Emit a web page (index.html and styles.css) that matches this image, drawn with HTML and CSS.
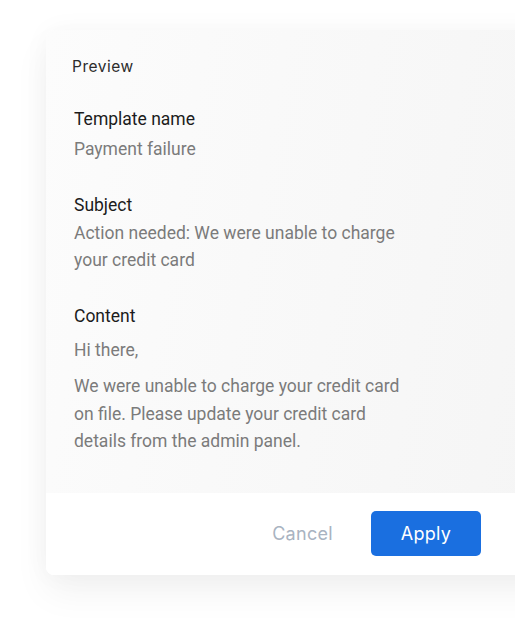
FILE: index.html
```html
<!DOCTYPE html>
<html>
<head>
<meta charset="utf-8">
<link rel="stylesheet" href="styles.css">
</head>
<body>
<div class="stage">
  <div class="card">
    <div class="card-body">
      <div class="title">Preview</div>
      <div class="field first">
        <div class="label">Template name</div>
        <div class="value first-value">Payment failure</div>
      </div>
      <div class="field">
        <div class="label">Subject</div>
        <div class="value">Action needed: We were unable to charge your credit card</div>
      </div>
      <div class="field content">
        <div class="label">Content</div>
        <div class="value greeting">Hi there,</div>
        <div class="value para">We were unable to charge your credit card on file. Please update your credit card details from the admin panel.</div>
      </div>
    </div>
    <div class="card-footer">
      <button class="btn btn-cancel">Cancel</button>
      <button class="btn btn-apply">Apply</button>
    </div>
  </div>
</div>
</body>
</html>
```
FILE: styles.css
```css
html, body {
  margin: 0;
  padding: 0;
  background: #ffffff;
  overflow: hidden;
}
.stage {
  width: 515px;
  height: 635px;
  overflow: hidden;
  padding-top: 30px;
  padding-left: 46px;
  box-sizing: border-box;
  background: #ffffff;
}
.card {
  width: 520px;
  border-radius: 8px;
  background: #ffffff;
  box-shadow: 0 18px 36px rgba(0, 0, 0, 0.05), 0 0 28px rgba(0, 0, 0, 0.035);
  overflow: hidden;
}
.card-body {
  padding: 27px 28px 0 28px;
  background: linear-gradient(100deg, #fcfcfc 0%, #f9f9f9 40%, #f5f5f5 100%);
  height: 463px;
  box-sizing: border-box;
}
.title {
  font-family: Inter, "Open Sans", sans-serif;
  font-size: 15.5px;
  letter-spacing: 0.5px;
  line-height: 20px;
  color: #2c2c2c;
  margin-left: -2px;
}
.field {
  margin-top: 30px;
  width: 340px;
  font-family: Roboto, "Liberation Sans", sans-serif;
  font-size: 17.5px;
}
.field.first {
  margin-top: 30px;
}
.field.content {
  margin-top: 30px;
}
.label {
  color: #1c1c1c;
  line-height: 24px;
}
.value {
  color: #7b7b7b;
  line-height: 27px;
  margin-top: 3px;
}
.value.first-value {
  margin-top: 5px;
}
.value.greeting {
  margin-top: 9px;
}
.value.para {
  margin-top: 9px;
  line-height: 27.5px;
}
.card-footer {
  height: 82px;
  background: #ffffff;
  display: flex;
  align-items: center;
  justify-content: flex-end;
  padding-right: 85px;
  padding-bottom: 2px;
  box-sizing: border-box;
  gap: 22px;
}
.btn {
  font-family: Inter, "Open Sans", sans-serif;
  font-size: 18px;
  letter-spacing: 0.3px;
  border: none;
  cursor: pointer;
  padding: 0;
}
.btn-cancel {
  background: transparent;
  color: #a9b3c1;
  padding: 0 16px;
  height: 45px;
}
.btn-apply {
  background: #1a6fe0;
  color: #ffffff;
  width: 110px;
  height: 45px;
  border-radius: 5px;
}
```
